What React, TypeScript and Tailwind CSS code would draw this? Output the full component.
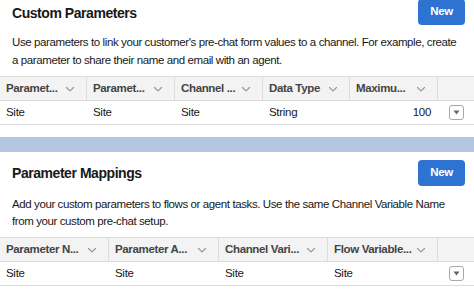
import React from "react";

const Chevron = () => (
  <svg width="12" height="12" viewBox="0 0 12 12" fill="none" className="shrink-0">
    <path d="M2.5 4.5 L6 7.8 L9.5 4.5" stroke="#939393" strokeWidth="1.1" strokeLinecap="round" strokeLinejoin="round" />
  </svg>
);

const RowMenu = () => (
  <div className="w-[15px] h-[15px] border border-[#a8a8a8] rounded-[3px] flex items-center justify-center bg-white">
    <svg width="7" height="5" viewBox="0 0 7 5">
      <path d="M0.5 0.5 L6.5 0.5 L3.5 4.5 Z" fill="#666" />
    </svg>
  </div>
);

type Col = { label: string; w: number; value: string; right?: boolean };

function Table({ cols }: { cols: Col[] }) {
  return (
    <div className="w-full">
      <div className="flex h-[25px] bg-[#f3f3f3] border-t border-b border-[#dcdcdc]">
        {cols.map((c, i) => (
          <div
            key={i}
            style={{ width: c.w }}
            className="flex items-center justify-between pl-[6px] pr-[10px] border-r border-[#dcdcdc] shrink-0"
          >
            <span className="text-[11.5px] tracking-[-0.35px] font-bold text-[#444444] whitespace-nowrap">{c.label}</span>
            <Chevron />
          </div>
        ))}
        <div className="flex-1" />
      </div>
      <div className="flex h-[24px] border-b border-[#dcdcdc] bg-white">
        {cols.map((c, i) => (
          <div
            key={i}
            style={{ width: c.w }}
            className={`flex items-center shrink-0 px-[6px] ${c.right ? "justify-end pr-[7px]" : ""}`}
          >
            <span className="text-[11.5px] tracking-[-0.3px] text-[#181818]">{c.value}</span>
          </div>
        ))}
        <div className="flex-1 flex items-center justify-center">
          <RowMenu />
        </div>
      </div>
    </div>
  );
}

export default function App() {
  const cols1: Col[] = [
    { label: "Paramet...", w: 87, value: "Site" },
    { label: "Paramet...", w: 88, value: "Site" },
    { label: "Channel ...", w: 88, value: "Site" },
    { label: "Data Type", w: 87, value: "String" },
    { label: "Maximu...", w: 88, value: "100", right: true },
  ];
  const cols2: Col[] = [
    { label: "Parameter N...", w: 109, value: "Site" },
    { label: "Parameter A...", w: 110, value: "Site" },
    { label: "Channel Vari...", w: 109, value: "Site" },
    { label: "Flow Variable...", w: 110, value: "Site" },
  ];
  return (
    <div
      className="w-[474px] h-[293px] overflow-hidden bg-white text-[#181818]"
      style={{ fontFamily: '"Liberation Sans", Arial, sans-serif' }}
    >
      <div className="h-[137px] flex flex-col">
        <div className="flex items-center justify-between pl-[12px] pr-[9px] h-[26px] -mt-px">
          <h2 className="text-[14px] tracking-[-0.45px] font-bold pt-[2px]">Custom Parameters</h2>
          <button className="w-[47px] h-[26px] rounded-[4px] bg-[#2e72d2] text-white text-[11.5px] tracking-[-0.3px] font-bold">New</button>
        </div>
        <p className="pl-[12px] mt-[8px] text-[11.5px] tracking-[-0.4px] leading-[18px] whitespace-nowrap">
          Use parameters to link your customer's pre-chat form values to a channel. For example, create
          <br />
          a parameter to share their name and email with an agent.
        </p>
        <div className="mt-[7px]">
          <Table cols={cols1} />
        </div>
      </div>
      <div className="h-[15px] bg-[#b3c5e1]" />
      <div className="flex flex-col">
        <div className="flex items-center justify-between pl-[12px] pr-[9px] h-[26px] mt-[8px]">
          <h2 className="text-[14px] tracking-[-0.45px] font-bold">Parameter Mappings</h2>
          <button className="w-[47px] h-[26px] rounded-[4px] bg-[#2e72d2] text-white text-[11.5px] tracking-[-0.3px] font-bold">New</button>
        </div>
        <p className="pl-[12px] mt-[10px] text-[11.5px] tracking-[-0.4px] leading-[17px] whitespace-nowrap">
          Add your custom parameters to flows or agent tasks. Use the same Channel Variable Name
          <br />
          from your custom pre-chat setup.
        </p>
        <div className="mt-[7px]">
          <Table cols={cols2} />
        </div>
      </div>
    </div>
  );
}
